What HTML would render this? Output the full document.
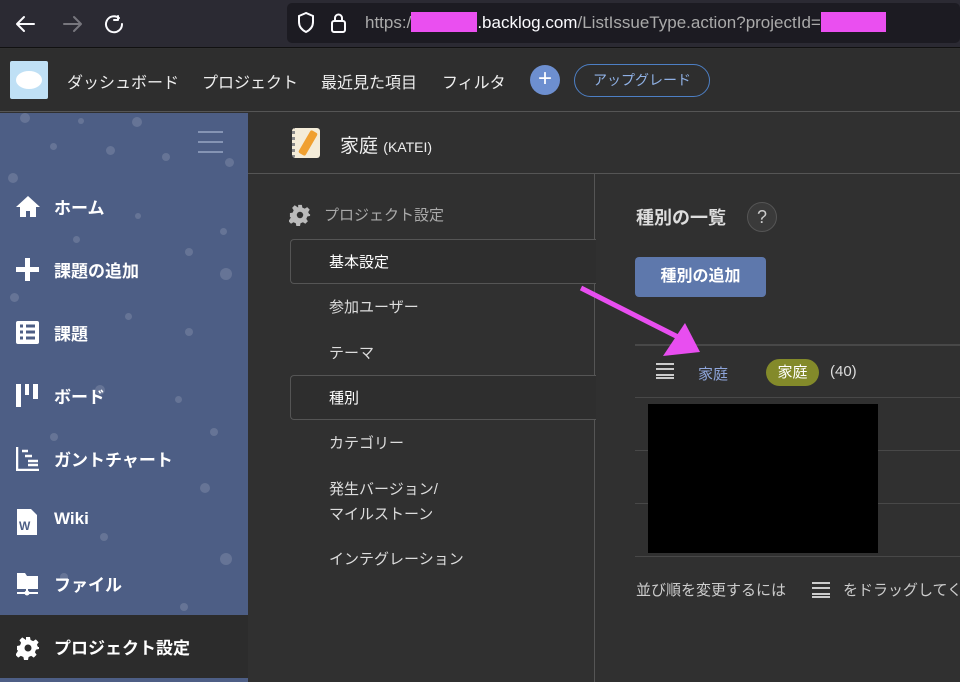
<!DOCTYPE html>
<html><head><meta charset="utf-8"><style>
*{margin:0;padding:0;box-sizing:border-box}
body{width:960px;height:682px;overflow:hidden;background:#303030;font-family:"Liberation Sans","Noto Sans CJK JP",sans-serif;color:#ddd;position:relative}
.abs{position:absolute}
.nav a{position:absolute;top:69px;font-size:16px;color:#eee}
.side{left:0;top:113px;width:248px;height:502px;background:#4d5e85;overflow:hidden}
.si{position:absolute;left:54px;font-size:17px;color:#fff;font-weight:bold}
.ic{position:absolute;left:16px}
.dot{position:absolute;border-radius:50%;background:rgba(255,255,255,.14)}
.sn{position:absolute;left:329px;font-size:15px;color:#ddd}
.hb{display:inline-block;width:18px;height:16px;border-top:2px solid #ccc;border-bottom:2px solid #ccc;position:relative}
.hb:before{content:"";position:absolute;left:0;right:0;top:3px;height:4px;border-top:2px solid #ccc;border-bottom:2px solid #ccc}
</style></head><body>
<div class="abs" style="left:0;top:0;width:960px;height:48px;background:#2b2a33;border-bottom:1px solid #111"></div>
<svg class="abs" style="left:14px;top:12px" width="110" height="24" viewBox="0 0 110 24" fill="none" stroke-width="2" stroke-linecap="round" stroke-linejoin="round">
<path d="M20 12H4M10 5L3 12L10 19" stroke="#fbfbfe"/>
<path d="M50 12H66M60 5L67 12L60 19" stroke="#77767d"/>
<path d="M110 12a8 8 0 1 1-3-6" stroke="#fbfbfe" transform="translate(-2 0)"/><path d="M104 4v4h-4" stroke="#fbfbfe"/>
</svg>
<div class="abs" style="left:287px;top:3px;width:673px;height:40px;background:#1c1b22;border-radius:5px"></div>
<svg class="abs" style="left:296px;top:11px" width="60" height="24" fill="none" stroke="#fbfbfe" stroke-width="2"><path d="M10 2L3 5v6c0 5 3 8 7 10 4-2 7-5 7-10V5z"/><rect x="36" y="10" width="13" height="11" rx="2"/><path d="M39 10V7a3.5 3.5 0 0 1 7 0v3"/></svg>
<div class="abs" style="left:365px;top:12px;font-size:17px;color:#aaa;white-space:nowrap">https:/<span style="display:inline-block;width:66px;height:20px;background:#ea4ff0;vertical-align:-4px"></span><span style="color:#fbfbfe">.backlog.com</span>/ListIssueType.action?projectId=<span style="display:inline-block;width:65px;height:20px;background:#ea4ff0;vertical-align:-4px"></span></div>
<div class="abs" style="left:0;top:49px;width:960px;height:63px;background:#2e2e2e;border-bottom:1px solid #555"></div>
<div class="abs" style="left:10px;top:61px;width:38px;height:38px;background:#bfe0f5;border-radius:2px"><div style="position:absolute;left:6px;top:10px;width:26px;height:18px;background:#fff;border-radius:50%"></div></div>
<div class="nav"><a style="left:67px">ダッシュボード</a><a style="left:202px">プロジェクト</a><a style="left:321px">最近見た項目</a><a style="left:442px">フィルタ</a></div>
<div class="abs" style="left:530px;top:65px;width:30px;height:30px;border-radius:50%;background:#6d8fd0;color:#fff;font-size:24px;line-height:28px;text-align:center">+</div>
<div class="abs" style="left:574px;top:64px;width:136px;height:33px;border:1.5px solid #4d7fc4;border-radius:17px;color:#8fb0e4;font-size:14px;line-height:31px;text-align:center">アップグレード</div>
<div class="abs side">
<div class="dot" style="left:20px;top:0;width:10px;height:10px"></div><div class="dot" style="left:78px;top:5px;width:6px;height:6px"></div><div class="dot" style="left:132px;top:4px;width:10px;height:10px"></div><div class="dot" style="left:50px;top:30px;width:7px;height:7px"></div><div class="dot" style="left:106px;top:33px;width:9px;height:9px"></div><div class="dot" style="left:162px;top:40px;width:8px;height:8px"></div><div class="dot" style="left:225px;top:45px;width:9px;height:9px"></div><div class="dot" style="left:8px;top:60px;width:10px;height:10px"></div><div class="dot" style="left:135px;top:100px;width:6px;height:6px"></div><div class="dot" style="left:220px;top:115px;width:7px;height:7px"></div><div class="dot" style="left:73px;top:123px;width:7px;height:7px"></div><div class="dot" style="left:185px;top:135px;width:8px;height:8px"></div><div class="dot" style="left:220px;top:155px;width:12px;height:12px"></div><div class="dot" style="left:10px;top:180px;width:9px;height:9px"></div><div class="dot" style="left:125px;top:200px;width:7px;height:7px"></div><div class="dot" style="left:185px;top:215px;width:8px;height:8px"></div><div class="dot" style="left:95px;top:272px;width:10px;height:10px"></div><div class="dot" style="left:175px;top:283px;width:7px;height:7px"></div><div class="dot" style="left:210px;top:315px;width:8px;height:8px"></div><div class="dot" style="left:50px;top:320px;width:8px;height:8px"></div><div class="dot" style="left:200px;top:370px;width:10px;height:10px"></div><div class="dot" style="left:100px;top:420px;width:8px;height:8px"></div><div class="dot" style="left:220px;top:440px;width:12px;height:12px"></div><div class="dot" style="left:60px;top:460px;width:8px;height:8px"></div><div class="dot" style="left:180px;top:490px;width:8px;height:8px"></div>
</div>
<div class="abs" style="left:198px;top:131px;width:25px;height:22px;border-top:2px solid #8594b4;border-bottom:2px solid #8594b4"><div style="margin-top:8px;border-top:2px solid #8594b4"></div></div>
<svg class="ic" style="top:195px" width="24" height="22"><path d="M12 1L0 12h4v10h6v-6h4v6h6V12h4z" fill="#fff"/></svg>
<div class="si" style="top:194px">ホーム</div>
<svg class="ic" style="top:258px" width="24" height="24"><path d="M9 0h5v9h9v5h-9v9H9v-9H0V9h9z" fill="#fff"/></svg>
<div class="si" style="top:257px">課題の追加</div>
<svg class="ic" style="top:321px" width="24" height="24"><rect x="0" y="0" width="23" height="23" rx="2" fill="#fff"/><path d="M4 5h3M10 5h9M4 11h3M10 11h9M4 17h3M10 17h9" stroke="#4d5e85" stroke-width="3"/></svg>
<div class="si" style="top:320px">課題</div>
<svg class="ic" style="top:384px" width="24" height="24"><path d="M0 0h5v23H0zM9 0h4v11H9zM17 0h5v15h-5z" fill="#fff"/></svg>
<div class="si" style="top:383px">ボード</div>
<svg class="ic" style="top:447px" width="24" height="24"><path d="M1 0v23h22M6 4h6M9 9h7M12 14h10M12 18h10" stroke="#fff" stroke-width="2.5" fill="none"/></svg>
<div class="si" style="top:446px">ガントチャート</div>
<svg class="ic" style="top:509px" width="24" height="26"><path d="M1 0h14l6 6v20H1z" fill="#fff"/><text x="3" y="21" font-size="12" font-weight="bold" fill="#4d5e85" font-family="Liberation Sans">W</text></svg>
<div class="si" style="top:509px">Wiki</div>
<svg class="ic" style="top:573px" width="24" height="24"><path d="M1 0h8l2 3h11v13H1z" fill="#fff"/><path d="M1 20h21M11 16v4" stroke="#fff" stroke-width="2"/><circle cx="11" cy="20" r="2.5" fill="#fff"/></svg>
<div class="si" style="top:571px">ファイル</div>
<div class="abs" style="left:0;top:615px;width:248px;height:63px;background:#2c2c2c"></div>
<div class="abs" style="left:0;top:678px;width:248px;height:4px;background:#4d5e85"></div>
<svg class="ic" style="top:636px" width="24" height="24" viewBox="0 0 24 24"><path fill="#fff" d="M10 1h4l.6 3 2.6 1.1 2.6-1.7 2.8 2.8-1.7 2.6L22 11l1 0v2l-3 .6-1.1 2.6 1.7 2.6-2.8 2.8-2.6-1.7-2.6 1.1-.6 3h-4l-.6-3-2.6-1.1-2.6 1.7-2.8-2.8 1.7-2.6L2 14.6 1 14v-4l3-.6 1.1-2.6-1.7-2.6 2.8-2.8 2.6 1.7L10 4z"/><circle cx="12" cy="12" r="3.5" fill="#2c2c2c"/></svg>
<div class="si" style="top:634px">プロジェクト設定</div>
<div class="abs" style="left:248px;top:173px;width:712px;height:1px;background:#555"></div>
<div class="abs" style="left:292px;top:128px;width:28px;height:30px;background:#f4ecd8;border-radius:3px;border-left:3px dotted #888"></div>
<div class="abs" style="left:304px;top:130px;width:8px;height:26px;background:#f0a030;transform:rotate(30deg);border-radius:2px"></div>
<div class="abs" style="left:340px;top:131px;font-size:19px;color:#eee">家庭 <span style="font-size:14px">(KATEI)</span></div>
<svg class="abs" style="left:289px;top:204px" width="22" height="22" viewBox="0 0 24 24"><path fill="#bbb" d="M10 1h4l.6 3 2.6 1.1 2.6-1.7 2.8 2.8-1.7 2.6L22 11l1 0v2l-3 .6-1.1 2.6 1.7 2.6-2.8 2.8-2.6-1.7-2.6 1.1-.6 3h-4l-.6-3-2.6-1.1-2.6 1.7-2.8-2.8 1.7-2.6L2 14.6 1 14v-4l3-.6 1.1-2.6-1.7-2.6 2.8-2.8 2.6 1.7L10 4z"/><circle cx="12" cy="12" r="3.5" fill="#303030"/></svg>
<div class="abs" style="left:324px;top:204px;font-size:15px;color:#aaa">プロジェクト設定</div>
<div class="abs" style="left:594px;top:174px;width:1px;height:66px;background:#555"></div>
<div class="abs" style="left:290px;top:239px;width:306px;height:45px;border:1px solid #555;border-right:none;border-radius:4px 0 0 4px;background:#2e2e2e"></div>
<div class="abs" style="left:594px;top:284px;width:1px;height:92px;background:#555"></div>
<div class="abs" style="left:290px;top:375px;width:306px;height:45px;border:1px solid #555;border-right:none;border-radius:4px 0 0 4px;background:#2e2e2e"></div>
<div class="abs" style="left:594px;top:419px;width:1px;height:263px;background:#555"></div>
<div class="sn" style="top:251px;color:#fff">基本設定</div>
<div class="sn" style="top:296px">参加ユーザー</div>
<div class="sn" style="top:342px">テーマ</div>
<div class="sn" style="top:387px;color:#fff">種別</div>
<div class="sn" style="top:432px">カテゴリー</div>
<div class="sn" style="top:477px;line-height:25px">発生バージョン/<br>マイルストーン</div>
<div class="sn" style="top:548px">インテグレーション</div>
<div class="abs" style="left:636px;top:204px;font-size:18px;font-weight:bold;color:#ddd">種別の一覧</div>
<div class="abs" style="left:747px;top:202px;width:30px;height:30px;border-radius:50%;border:1px solid #555;background:#3a3a3a;color:#ccc;font-size:18px;text-align:center;line-height:28px">?</div>
<div class="abs" style="left:635px;top:257px;width:131px;height:40px;background:#5e78ac;border-radius:4px;color:#fff;font-size:16px;font-weight:bold;text-align:center;line-height:40px">種別の追加</div>
<div class="abs" style="left:635px;top:344px;width:325px;height:2px;background:#484848"></div>
<div class="abs" style="left:656px;top:363px"><span class="hb"></span></div>
<div class="abs" style="left:698px;top:363px;font-size:15px;color:#8fa6dc">家庭</div>
<div class="abs" style="left:766px;top:359px;width:53px;height:27px;border-radius:14px;background:#838a2a;color:#fff;font-size:15px;text-align:center;line-height:27px">家庭</div>
<div class="abs" style="left:830px;top:363px;font-size:15px;color:#ddd">(40)</div>
<div class="abs" style="left:635px;top:397px;width:325px;height:1px;background:#484848"></div>
<div class="abs" style="left:635px;top:450px;width:325px;height:1px;background:#484848"></div>
<div class="abs" style="left:635px;top:503px;width:325px;height:1px;background:#484848"></div>
<div class="abs" style="left:635px;top:556px;width:325px;height:1px;background:#484848"></div>
<div class="abs" style="left:648px;top:404px;width:230px;height:149px;background:#000"></div>
<div class="abs" style="left:636px;top:579px;font-size:15px;color:#ccc;white-space:nowrap">並び順を変更するには</div>
<div class="abs" style="left:812px;top:582px"><span class="hb"></span></div>
<div class="abs" style="left:843px;top:579px;font-size:15px;color:#ccc;white-space:nowrap">をドラッグしてく</div>
<svg class="abs" style="left:575px;top:280px" width="140" height="80"><path d="M6 8L105 58" stroke="#e84ef0" stroke-width="5"/><path d="M125 72L88 76L110 43z" fill="#e84ef0"/></svg>
</body></html>
